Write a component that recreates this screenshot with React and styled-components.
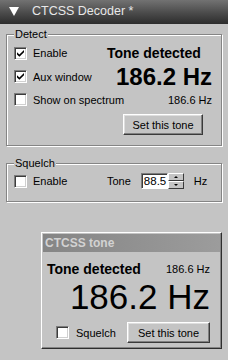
import styled, { createGlobalStyle } from "styled-components";

const Global = createGlobalStyle`
  html, body {
    margin: 0;
    background: #c4c4c4;
  }
  body {
    font-family: "Liberation Sans", Arial, sans-serif;
    color: #000;
  }
`;

const Page = styled.div`
  width: 228px;
  height: 360px;
  background: #c4c4c4;
  display: flex;
  flex-direction: column;
  overflow: hidden;
`;

const TitleBar = styled.div`
  height: 24px;
  box-sizing: border-box;
  display: flex;
  align-items: center;
  gap: 13px;
  padding: 0 0 2px 9px;
  background: linear-gradient(#727272, #4a4a4a 55%, #2c2c2c);
  color: #e8e8e8;
  font-size: 12.5px;
  white-space: nowrap;
`;

const Triangle = styled.span`
  width: 0;
  height: 0;
  border-left: 5.5px solid transparent;
  border-right: 5.5px solid transparent;
  border-top: 9px solid #fff;
`;

const Content = styled.div`
  display: flex;
  flex-direction: column;
  padding: 4px 6px 0 6px;
`;

const Group = styled.fieldset`
  margin: ${({ $mt }) => $mt || 0}px 0 0;
  padding: 0 9px ${({ $pb }) => $pb}px 7px;
  min-width: 0;
  border: 1px solid #858585;
  box-shadow: inset 1px 1px 0 #fff, 1px 1px 0 #fff;
`;

const Legend = styled.legend`
  padding: 0 1px;
  font-size: 11px;
  line-height: 13px;
  background: #c4c4c4;
`;

const Grid = styled.div`
  display: grid;
  grid-template-columns: 93px 1fr;
  grid-template-rows: ${({ $rows }) => $rows};
  align-items: center;
`;

const CheckRow = styled.label`
  display: flex;
  align-items: center;
  gap: ${({ $gap }) => $gap || 6}px;
  font-size: 11px;
  white-space: nowrap;
  margin-left: ${({ $ml }) => $ml || 0}px;
`;

const Box = styled.span`
  flex: none;
  width: 13px;
  height: 13px;
  box-sizing: border-box;
  display: flex;
  align-items: center;
  justify-content: center;
  background: #fff;
  border: 1px solid;
  border-color: #7c7c7c #fff #fff #7c7c7c;
  box-shadow: inset 1px 1px 0 #3c3c3c, inset -1px -1px 0 #d0d0d0;
`;

const Check = ({ checked }) => (
  <Box>
    {checked && (
      <svg width="7" height="7" viewBox="0 0 7 7">
        <path d="M0 2.2 L2.4 4.5 L7 0 L7 2.3 L2.4 6.8 L0 4.5 Z" fill="#000" />
      </svg>
    )}
  </Box>
);

const BoldLabel = styled.div`
  font-size: 14px;
  font-weight: bold;
  line-height: 16px;
  white-space: nowrap;
`;

const BigValue = styled.div`
  justify-self: end;
  grid-column: ${({ $span }) => ($span ? "1 / -1" : "auto")};
  font-size: ${({ $size }) => $size}px;
  font-weight: ${({ $bold }) => ($bold ? "bold" : "normal")};
  line-height: ${({ $lh }) => $lh};
  text-align: right;
  white-space: nowrap;
`;

const SmallValue = styled.div`
  justify-self: end;
  font-size: 11px;
  white-space: nowrap;
`;

const Button = styled.button`
  width: ${({ $w }) => $w}px;
  height: 21px;
  padding: 0;
  font-family: inherit;
  font-size: 11px;
  color: #000;
  background: #c4c4c4;
  border: 1px solid;
  border-color: #fff #3a3a3a #3a3a3a #fff;
  box-shadow: inset -1px -1px 0 #808080, inset 1px 1px 0 #dedede;
  justify-self: start;
  align-self: start;
  white-space: nowrap;
  margin: ${({ $m }) => $m || 0};
`;

const ToneRow = styled.div`
  display: flex;
  align-items: center;
  font-size: 11px;
`;

const Spin = styled.div`
  display: flex;
  margin: 0 10px;
`;

const SpinEdit = styled.div`
  width: 27px;
  height: 16px;
  box-sizing: border-box;
  border: 1px solid;
  border-color: #7c7c7c #fff #fff #7c7c7c;
  box-shadow: inset 1px 1px 0 #3c3c3c;
  background: #fff;
  font-size: 11.5px;
  line-height: 14px;
  padding-left: 2px;
`;

const SpinArrows = styled.div`
  display: flex;
  flex-direction: column;
`;

const SpinBtn = styled.div`
  width: 16px;
  height: 8px;
  box-sizing: border-box;
  display: flex;
  align-items: center;
  justify-content: center;
  background: #c4c4c4;
  border: 1px solid;
  border-color: #fff #3a3a3a #3a3a3a #fff;
  &::after {
    content: "";
    border-left: 2px solid transparent;
    border-right: 2px solid transparent;
    ${({ $down }) => ($down ? "border-top" : "border-bottom")}: 2px solid #000;
  }
`;

const ToneWindow = styled.div`
  align-self: flex-end;
  width: 181px;
  margin-top: 30px;
  box-sizing: border-box;
  padding: 1px;
  border: 1px solid;
  border-color: #fff #2e2e2e #2e2e2e #fff;
  box-shadow: inset -1px -1px 0 #858585;
`;

const WinTitle = styled.div`
  height: 18px;
  display: flex;
  align-items: center;
  padding-left: 2px;
  background: linear-gradient(90deg, #858585, #9c9c9c);
  color: #d2d2d2;
  font-size: 12px;
  font-weight: bold;
`;

const WinBody = styled.div`
  display: grid;
  grid-template-columns: 1fr auto;
  padding: 9px 10px 4px 4px;
  align-items: center;
`;

const WinFooter = styled.div`
  grid-column: 1 / -1;
  display: flex;
  align-items: center;
  justify-content: space-between;
  margin-top: 5px;
`;

export default function App() {
  return (
    <Page>
      <Global />
      <TitleBar>
        <Triangle />
        CTCSS Decoder *
      </TitleBar>
      <Content>
        <Group $pb={8}>
          <Legend>Detect</Legend>
          <Grid $rows="24px 23px 23px 26px">
            <CheckRow>
              <Check checked />
              Enable
            </CheckRow>
            <BoldLabel>Tone detected</BoldLabel>
            <CheckRow>
              <Check checked />
              Aux window
            </CheckRow>
            <BigValue $size={24} $lh="23px" $bold>
              186.2 Hz
            </BigValue>
            <CheckRow>
              <Check />
              Show on spectrum
            </CheckRow>
            <SmallValue>186.6 Hz</SmallValue>
            <span />
            <Button $w={80} $m="3px 0 0 16px">
              Set this tone
            </Button>
          </Grid>
        </Group>
        <Group $mt={11} $pb={9}>
          <Legend>Squelch</Legend>
          <Grid $rows="22px">
            <CheckRow>
              <Check />
              Enable
            </CheckRow>
            <ToneRow>
              Tone
              <Spin>
                <SpinEdit>88.5</SpinEdit>
                <SpinArrows>
                  <SpinBtn />
                  <SpinBtn $down />
                </SpinArrows>
              </Spin>
              Hz
            </ToneRow>
          </Grid>
        </Group>
        <ToneWindow>
          <WinTitle>CTCSS tone</WinTitle>
          <WinBody>
            <BoldLabel>Tone detected</BoldLabel>
            <SmallValue>186.6 Hz</SmallValue>
            <BigValue $size={35} $lh="normal" $span>
              186.2 Hz
            </BigValue>
            <WinFooter>
              <CheckRow $ml={9} $gap={7}>
                <Check />
                Squelch
              </CheckRow>
              <Button $w={83}>Set this tone</Button>
            </WinFooter>
          </WinBody>
        </ToneWindow>
      </Content>
    </Page>
  );
}
